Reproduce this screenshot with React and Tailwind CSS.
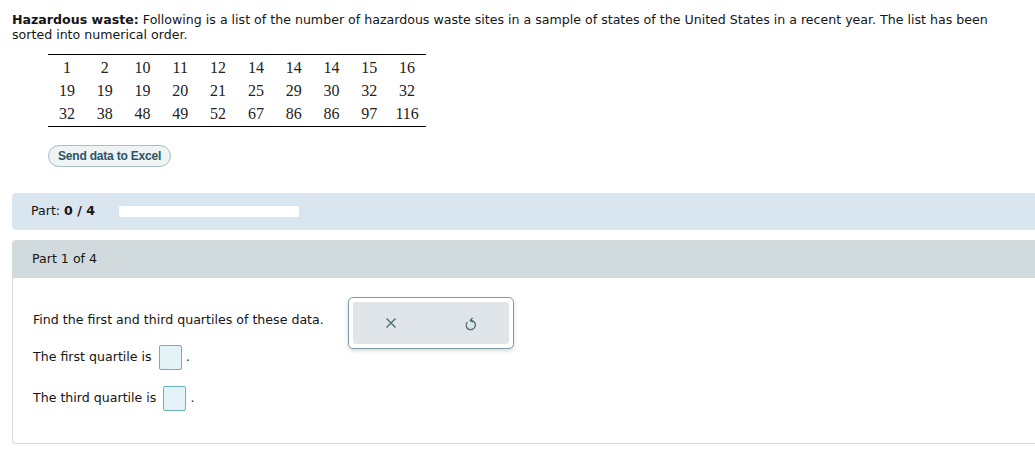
import React from 'react';

const rows = [
  [1, 2, 10, 11, 12, 14, 14, 14, 15, 16],
  [19, 19, 19, 20, 21, 25, 29, 30, 32, 32],
  [32, 38, 48, 49, 52, 67, 86, 86, 97, 116],
];

const AnswerBox = () => (
  <span className="inline-block w-[23px] h-[25px] align-middle ml-[7px] mr-[4px] rounded-[2px] border border-[#6cafc0] bg-[#e4f3f8]" />
);

const App = () => {
  return (
    <div className="w-screen overflow-hidden bg-white text-[#151515] font-['DejaVu_Sans',Verdana,sans-serif] text-[12.6px]">
      {/* Question text */}
      <div className="px-3 pt-[12px] leading-[15px]">
        <p>
          <b>Hazardous waste:</b> Following is a list of the number of hazardous waste sites in a sample of states of the United States in a recent year. The list has been sorted into numerical order.
        </p>
      </div>

      {/* Data table */}
      <div className="ml-[48px] mt-[12px] w-[378px] border-t border-b border-black font-['Liberation_Serif',serif] text-[16px] text-[#222] py-[1px]">
        {rows.map((r, i) => (
          <div key={i} className="grid grid-cols-10 h-[23px] items-center">
            {r.map((n, j) => (
              <span key={j} className="text-center">{n}</span>
            ))}
          </div>
        ))}
      </div>

      <button className="ml-[48px] mt-[18px] h-[22px] px-[9px] rounded-full border border-[#a8bfc5] bg-[#eef3f4] text-[#2c5566] text-[12px] font-semibold font-['Liberation_Sans',Arial,sans-serif] tracking-[-0.2px]">
        Send data to Excel
      </button>

      {/* Progress bar */}
      <div className="ml-3 mr-[-12px] mt-[26px] h-[37px] bg-[#dae6ef] rounded-l-[4px] flex items-center pl-[19px]">
        <span>Part: <b>0 / 4</b></span>
        <div className="ml-[24px] w-[180px] h-[11px] bg-white rounded-[2px]" />
      </div>

      {/* Part panel */}
      <div className="ml-3 mr-[-12px] mt-[10px] rounded-l-[4px] border-l border-b border-[#d3dbdd]">
        <div className="h-[38px] bg-[#d1dadc] flex items-center pl-[19px] rounded-tl-[4px]">
          Part 1 of 4
        </div>
        <div className="pl-[20px] pt-[19px] pb-[32px] flex items-start">
          <div className="pt-[14px]">
            <p>Find the first and third quartiles of these data.</p>
            <p className="mt-[15px] flex items-center">
              The first quartile is<AnswerBox />.
            </p>
            <p className="mt-[16px] flex items-center">
              The third quartile is<AnswerBox />.
            </p>
          </div>
          <div className="ml-[24px] w-[166px] h-[52px] rounded-[5px] border border-[#7f9ba6] bg-white p-[4px] shadow-[0_2px_4px_rgba(0,0,0,0.15)]">
            <div className="h-full w-full rounded-[3px] bg-[#dfe5e8] flex items-center justify-between px-[32px]">
              <svg width="12" height="12" viewBox="0 0 12 12">
                <path d="M1.5 1.5 L10.5 10.5 M10.5 1.5 L1.5 10.5" stroke="#4e6d78" strokeWidth="1.4" fill="none" />
              </svg>
              <svg width="12" height="15" viewBox="0 0 12 15">
                <path d="M5.5 4.5 A4.6 4.6 0 1 1 2.1 6.3" stroke="#4e6d78" strokeWidth="1.3" fill="none" strokeLinecap="round" />
                <path d="M7.2 2.2 L5.2 4.4 L7.4 5.9" stroke="#4e6d78" strokeWidth="1.3" fill="none" strokeLinecap="round" strokeLinejoin="round" />
              </svg>
            </div>
          </div>
        </div>
      </div>
    </div>
  );
};

export default App;
